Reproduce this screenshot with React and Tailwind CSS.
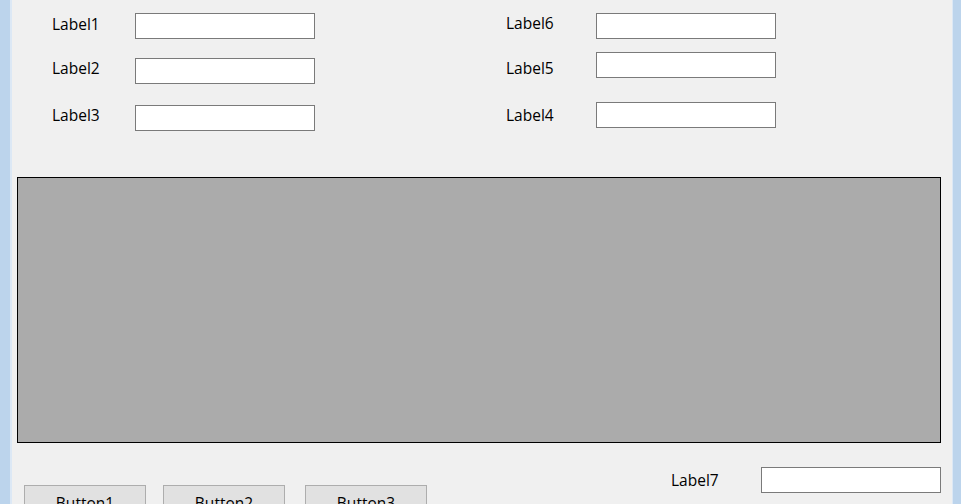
import React from "react";

const font = { fontFamily: '"Open Sans", "Noto Sans", sans-serif' };

function Box({ className = "" }) {
  return <div className={`w-[180px] h-[26px] bg-white border border-[#7a7a7a] shrink-0 ${className}`} />;
}

function Row({ label, labelW, labelTop, className = "" }) {
  return (
    <div className={`flex items-start ${className}`}>
      <div className={`${labelW} text-[15.5px] leading-[16px] text-black ${labelTop}`}>{label}</div>
      <Box />
    </div>
  );
}

function Btn({ children, className = "" }) {
  return (
    <div className={`w-[122px] h-[40px] bg-[#e1e1e1] border border-[#adadad] flex items-start justify-center pt-[9px] text-[15.5px] leading-[16px] text-black shrink-0 ${className}`}>
      {children}
    </div>
  );
}

export default function App() {
  return (
    <div className="w-[961px] h-[504px] overflow-hidden flex bg-[#f0f0f0]" style={font}>
      <div className="w-[10px] h-full bg-[#bcd4ec] shrink-0" />
      <div className="w-[2px] h-full bg-[#dce8f5] shrink-0" />
      <div className="w-[940px] h-full flex flex-col shrink-0">
        <div className="flex pt-[13px] h-[131px]">
          <div className="flex flex-col ml-[40px] w-[454px]">
            <Row label="Label1" labelW="w-[83px]" labelTop="mt-[3px]" />
            <Row label="Label2" labelW="w-[83px]" labelTop="mt-[2px]" className="mt-[19px]" />
            <Row label="Label3" labelW="w-[83px]" labelTop="mt-[2px]" className="mt-[21px]" />
          </div>
          <div className="flex flex-col">
            <Row label="Label6" labelW="w-[90px]" labelTop="mt-[2px]" />
            <Row label="Label5" labelW="w-[90px]" labelTop="mt-[8px]" className="mt-[13px]" />
            <Row label="Label4" labelW="w-[90px]" labelTop="mt-[5px]" className="mt-[24px]" />
          </div>
        </div>
        <div className="ml-[5px] mt-[46px] w-[924px] h-[266px] border border-black bg-[#ababab] shrink-0" />
        <div className="flex justify-between items-start">
          <div className="flex mt-[42px] ml-[12px]">
            <Btn>Button1</Btn>
            <Btn className="ml-[17px]">Button2</Btn>
            <Btn className="ml-[20px]">Button3</Btn>
          </div>
          <div className="flex items-start mt-[24px] mr-[11px]">
            <div className="w-[90px] text-[15.5px] leading-[16px] text-black mt-[5px]">Label7</div>
            <Box />
          </div>
        </div>
      </div>
      <div className="w-[1px] h-full bg-[#dce8f5] shrink-0" />
      <div className="flex-1 h-full bg-[#bcd4ec]" />
    </div>
  );
}
